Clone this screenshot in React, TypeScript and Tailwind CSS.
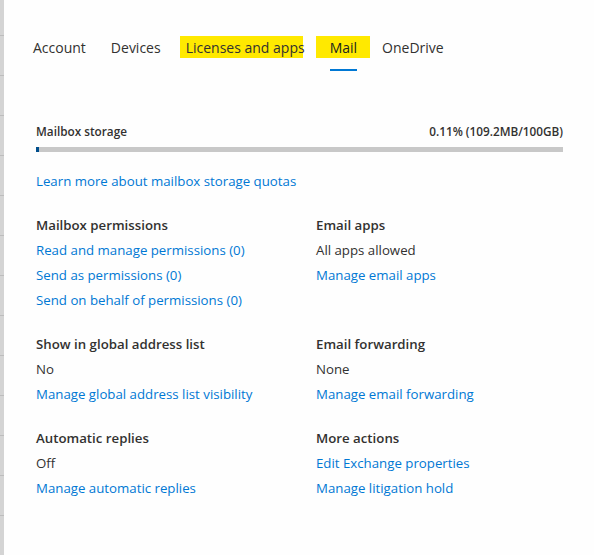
import React from "react";

const font = { fontFamily: '"Open Sans", "Noto Sans", sans-serif' };

type Section = {
  title: string;
  value?: string;
  links: string[];
};

const rows: [Section, Section][] = [
  [
    {
      title: "Mailbox permissions",
      links: [
        "Read and manage permissions (0)",
        "Send as permissions (0)",
        "Send on behalf of permissions (0)",
      ],
    },
    {
      title: "Email apps",
      value: "All apps allowed",
      links: ["Manage email apps"],
    },
  ],
  [
    {
      title: "Show in global address list",
      value: "No",
      links: ["Manage global address list visibility"],
    },
    {
      title: "Email forwarding",
      value: "None",
      links: ["Manage email forwarding"],
    },
  ],
  [
    {
      title: "Automatic replies",
      value: "Off",
      links: ["Manage automatic replies"],
    },
    {
      title: "More actions",
      links: ["Edit Exchange properties", "Manage litigation hold"],
    },
  ],
];

function Block({ s }: { s: Section }) {
  return (
    <div className="flex flex-col">
      <div className="h-[25px] leading-[25px] font-semibold text-[#323130]">{s.title}</div>
      {s.value && <div className="h-[25px] leading-[25px] text-[#323130]">{s.value}</div>}
      {s.links.map((l) => (
        <a key={l} className="h-[25px] leading-[25px] text-[#0078d4] w-fit cursor-pointer">
          {l}
        </a>
      ))}
    </div>
  );
}

const tabs = ["Account", "Devices", "Licenses and apps", "Mail", "OneDrive"];

export default function App() {
  return (
    <div className="flex w-[594px] h-[555px] bg-white overflow-hidden" style={font}>
      {/* collapsed list pane on the left */}
      <div className="w-[4px] shrink-0 bg-[#d4d4d4] flex flex-col">
        <div className="h-[35px]" />
        {Array.from({ length: 13 }).map((_, i) => (
          <div key={i} className="h-[40.4px] border-t border-[#bdbdbd]" />
        ))}
      </div>

      <div className="flex-1 pl-[32px] pr-[31px] text-[13.25px] text-[#323130] bg-[#fefefe]">
        {/* tab strip */}
        <div className="flex items-center gap-[25px] ml-[-3px] pt-[36px] h-[58px] text-[14px]">
          {tabs.map((t) => {
            const hl = t === "Licenses and apps" || t === "Mail";
            const active = t === "Mail";
            return (
              <div key={t} className="relative h-[22px] flex items-center">
                {hl && (
                  <span
                    className={
                      t === "Mail"
                        ? "absolute left-[-14px] right-[-13px] top-0 bottom-0 bg-[#ffe900]"
                        : "absolute left-[-6px] right-[2px] top-0 bottom-0 bg-[#ffe900]"
                    }
                  />
                )}
                <span className={active ? "relative font-medium text-[#201f1e]" : "relative text-[#323130]"}>
                  {t}
                </span>
                {active && <span className="absolute left-0 right-0 top-[33px] h-[2px] bg-[#0078d4]" />}
              </div>
            );
          })}
        </div>

        {/* storage meter */}
        <div className="mt-[66px] flex justify-between items-center h-[16px] text-[11.75px] font-semibold text-[#323130]">
          <span>Mailbox storage</span>
          <span>0.11% (109.2MB/100GB)</span>
        </div>
        <div className="mt-[7px] h-[5px] bg-[#c8c8c8] flex">
          <div className="w-[3px] bg-[#004e8c]" />
        </div>

        <a className="block mt-[19px] h-[20px] leading-[20px] text-[#0078d4] w-fit cursor-pointer">
          Learn more about mailbox storage quotas
        </a>

        {/* settings grid */}
        <div className="mt-[22px] grid grid-cols-[280px_1fr] gap-y-[19px]">
          {rows.map(([l, r]) => (
            <React.Fragment key={l.title}>
              <Block s={l} />
              <Block s={r} />
            </React.Fragment>
          ))}
        </div>
      </div>
    </div>
  );
}
